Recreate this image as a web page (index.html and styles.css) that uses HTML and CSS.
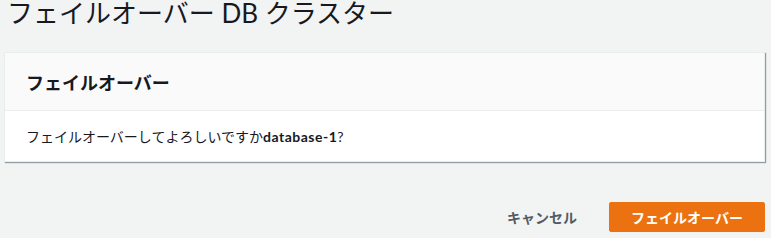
FILE: index.html
```html
<!DOCTYPE html>
<html lang="ja">
<head>
    <meta charset="UTF-8">
    <title>フェイルオーバー DB クラスター</title>
    <link rel="stylesheet" href="styles.css">
</head>
<body>
    <h1 class="page-title">フェイルオーバー DB クラスター</h1>

    <!-- Confirm card -->
    <div class="card">
        <div class="card-header">フェイルオーバー</div>
        <div class="card-body">
            フェイルオーバーしてよろしいですか<b>database-1</b>?
        </div>
    </div>

    <!-- Actions -->
    <div class="actions">
        <button class="btn-link">キャンセル</button>
        <button class="btn-primary">フェイルオーバー</button>
    </div>
</body>
</html>
```

FILE: styles.css
```css
* {
    box-sizing: border-box;
    margin: 0;
    padding: 0;
}
body {
    font-family: Lato, "Noto Sans CJK JP", sans-serif;
    background-color: #f2f3f3;
    color: #16191f;
    padding: 0 6px 0 4px;
}
.page-title {
    font-size: 26px;
    font-weight: normal;
    line-height: 26px;
    padding-left: 3px;
}
.card {
    margin-top: 26px;
    background-color: #fff;
    border: 1px solid #eaeded;
    box-shadow: 1px 1px 1px 0 rgba(0, 28, 36, 0.4);
}
.card-header {
    background-color: #fafafa;
    border-bottom: 1px solid #eaeded;
    height: 58px;
    padding: 0 21px;
    display: flex;
    align-items: center;
    font-size: 18px;
    font-weight: bold;
}
.card-body {
    height: 50px;
    padding: 0 21px;
    display: flex;
    align-items: center;
    font-size: 14px;
}
.card-body b {
    font-weight: bold;
    letter-spacing: 0.5px;
}
.actions {
    display: flex;
    justify-content: flex-end;
    align-items: center;
    margin-top: 40px;
    gap: 14px;
}
.btn-link {
    font-family: inherit;
    font-size: 14px;
    font-weight: bold;
    color: #545b64;
    background: none;
    border: none;
    padding: 4px 18px;
}
.btn-primary {
    font-family: inherit;
    font-size: 14px;
    font-weight: bold;
    color: #fff;
    background-color: #ec7211;
    border: 1px solid #ec7211;
    border-radius: 2px;
    width: 156px;
    height: 30px;
}
```
